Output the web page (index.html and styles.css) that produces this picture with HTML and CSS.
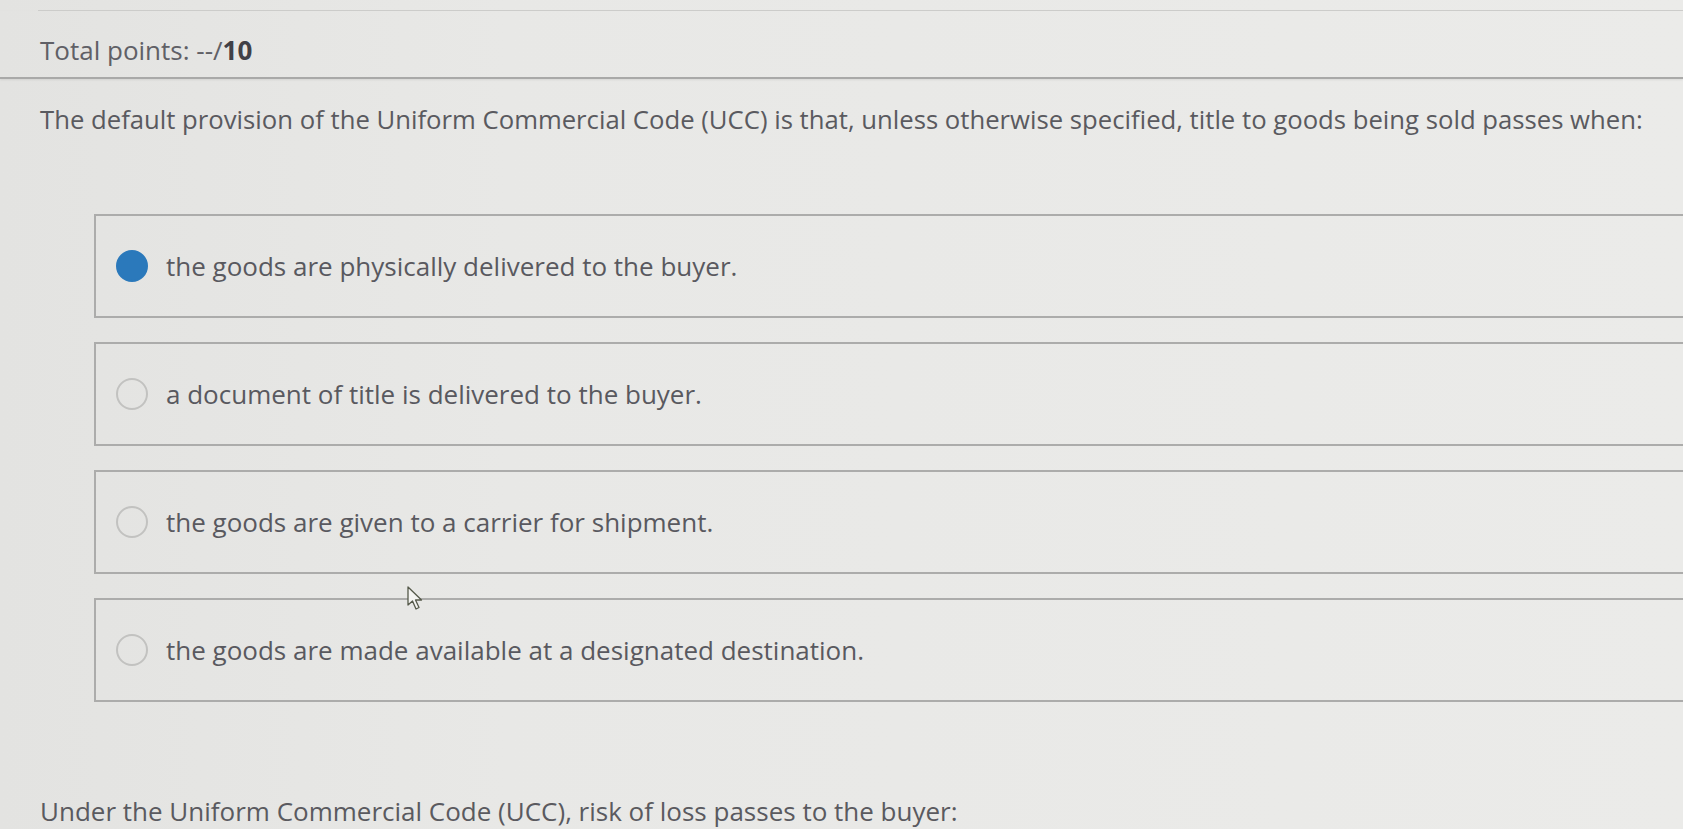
FILE: index.html
```html
<!DOCTYPE html>
<html lang="en">
<head>
<meta charset="utf-8">
<title>Quiz question</title>
<link rel="stylesheet" href="styles.css">
</head>
<body>
<div class="page">
  <div class="topline"></div>
  <div class="header">
    <span class="points">Total points: --/<b>10</b></span>
  </div>
  <p class="question">The default provision of the Uniform Commercial Code (UCC) is that, unless otherwise specified, title to goods being sold passes when:</p>
  <div class="options">
    <label class="option">
      <span class="radio selected"></span>
      <span class="opt-text">the goods are physically delivered to the buyer.</span>
    </label>
    <label class="option">
      <span class="radio"></span>
      <span class="opt-text">a document of title is delivered to the buyer.</span>
    </label>
    <label class="option">
      <span class="radio"></span>
      <span class="opt-text">the goods are given to a carrier for shipment.</span>
    </label>
    <label class="option">
      <span class="radio"></span>
      <span class="opt-text">the goods are made available at a designated destination.</span>
    </label>
  </div>
  <p class="question next">Under the Uniform Commercial Code (UCC), risk of loss passes to the buyer:</p>
  <svg class="cursor" width="18" height="26" viewBox="0 0 18 26" aria-hidden="true">
    <path d="M1 1 L1 19 L5.5 15 L9 23 L12 21.5 L8.5 14 L14.5 14 Z" fill="#f4f4f2" stroke="#55594a" stroke-width="1.3" stroke-linejoin="round"/>
  </svg>
</div>
</body>
</html>
```

FILE: styles.css
```css
html, body {
  margin: 0;
  padding: 0;
}

body {
  background: #e8e8e6;
  font-family: "Open Sans", "Liberation Sans", sans-serif;
  color: #5a5a5f;
  overflow: hidden;
}

.page {
  position: relative;
  height: 829px;
  overflow: hidden;
  background: linear-gradient(90deg, #e3e3e1 0%, #e8e8e6 30%, #ebebe9 100%);
}

.topline {
  margin-left: 38px;
  height: 10px;
  border-bottom: 1px solid #cdcdcb;
}

.header {
  height: 54px;
  padding-top: 12px;
  display: flex;
  align-items: center;
  padding-left: 40px;
  border-bottom: 2px solid #a9a9a8;
  box-shadow: 0 1px 2px rgba(0, 0, 0, 0.08);
}

.points {
  font-size: 26px;
  color: #606066;
}

.points b {
  font-weight: 700;
  color: #404046;
}

.question {
  margin: 23px 0 0 40px;
  font-size: 25.7px;
  line-height: 36px;
  white-space: nowrap;
}

.options {
  margin: 76px 0 0 94px;
  display: flex;
  flex-direction: column;
  gap: 24px;
}

.option {
  height: 104px;
  box-sizing: border-box;
  border: 2px solid #acacab;
  border-right: none;
  display: flex;
  align-items: center;
  padding-left: 20px;
  gap: 18px;
}

.radio {
  width: 32px;
  height: 32px;
  box-sizing: border-box;
  border-radius: 50%;
  border: 2px solid #c2c2c0;
  flex: none;
}

.radio.selected {
  background: #2b79bb;
  border-color: #2b79bb;
}

.opt-text {
  font-size: 26px;
  color: #59595f;
}

.question.next {
  margin-top: 95px;
  font-size: 26px;
  line-height: 28px;
}

.cursor {
  position: absolute;
  left: 407px;
  top: 586px;
}
```
